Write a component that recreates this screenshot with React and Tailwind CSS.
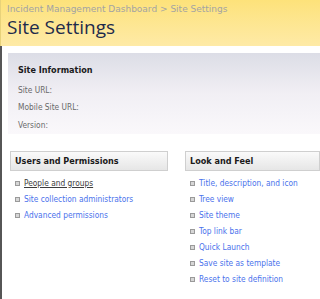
import React from 'react'

const leftLinks = [
  { label: 'People and groups', visited: true },
  { label: 'Site collection administrators' },
  { label: 'Advanced permissions' },
]

const rightLinks = [
  { label: 'Title, description, and icon' },
  { label: 'Tree view' },
  { label: 'Site theme' },
  { label: 'Top link bar' },
  { label: 'Quick Launch' },
  { label: 'Save site as template' },
  { label: 'Reset to site definition' },
]

function Bullet() {
  return (
    <span className="w-[5px] h-[5px] border border-[#9a9a9a] bg-[#d6d6d6] flex-shrink-0" />
  )
}

function LinkList({ items }) {
  return (
    <ul className="flex flex-col">
      {items.map(item => (
        <li key={item.label} className="flex items-center gap-[4px] h-[16px] pl-[5px]">
          <Bullet />
          <span
            className={
              item.visited
                ? 'text-[#3c3c3c] underline decoration-[#3c3c3c]'
                : 'text-[#4a72ec]'
            }
          >
            {item.label}
          </span>
        </li>
      ))}
    </ul>
  )
}

function SectionHeader({ children }) {
  return (
    <div className="h-[20px] flex items-center px-[4px] border border-[#cfcfcf] bg-gradient-to-b from-[#fafafa] to-[#e6e6e6] font-bold text-[#1a1a1a] text-[9px]">
      {children}
    </div>
  )
}

export default function App() {
  return (
    <div className="w-[320px] h-[299px] overflow-hidden bg-white font-['DejaVu_Sans_Condensed','Liberation_Sans',sans-serif] text-[8.3px] leading-none">
      {/* Title band */}
      <div className="h-[46px] bg-gradient-to-b from-[#fde27a] to-[#feeaa6] pl-[6px] pt-[5px] border-l border-[#e8d27a]">
        <p className="font-['DejaVu_Sans',sans-serif] text-[9px] text-[#a3a3a3] leading-[9px]">
          Incident Management Dashboard &gt; Site Settings
        </p>
        <h1 className="font-['Open_Sans',sans-serif] text-[19px] text-[#1e2b4c] leading-[22px] mt-[2px]">
          Site Settings
        </h1>
      </div>

      <div className="border-l-2 border-[#565656] h-[253px] pt-[7px]">
        {/* Site information */}
        <div className="ml-[6px] h-[81px] bg-gradient-to-b from-[#dcdde6] via-[#f1eff4] to-[#faf8fb] pl-[10px] pt-[13px] text-[#6a6a6a]">
          <p className="font-bold text-[#1a1a1a] text-[9px]">Site Information</p>
          <div className="flex flex-col gap-[9px] mt-[11px]">
            <p>Site URL:</p>
            <p>Mobile Site URL:</p>
            <p>Version:</p>
          </div>
        </div>

        {/* Settings columns */}
        <div className="flex mt-[17px]">
          <div className="ml-[8px] w-[158px] flex flex-col gap-[4px]">
            <SectionHeader>Users and Permissions</SectionHeader>
            <LinkList items={leftLinks} />
          </div>
          <div className="ml-[17px] flex-1 flex flex-col gap-[4px]">
            <SectionHeader>Look and Feel</SectionHeader>
            <LinkList items={rightLinks} />
          </div>
        </div>
      </div>
    </div>
  )
}
